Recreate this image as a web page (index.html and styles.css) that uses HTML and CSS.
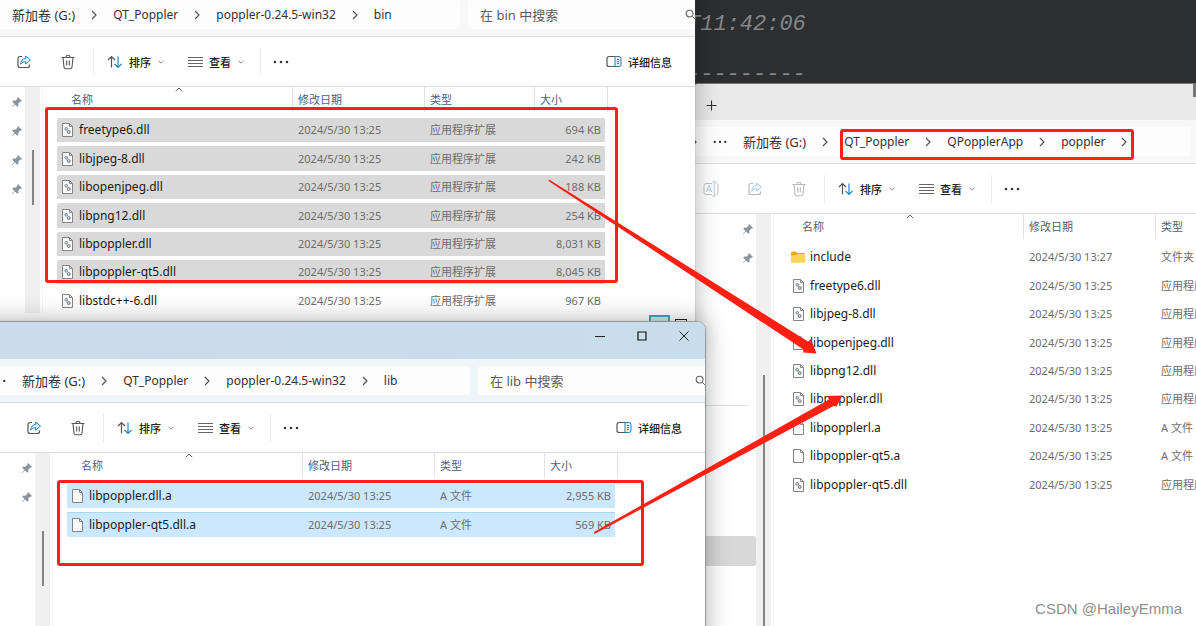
FILE: index.html
```html
<!DOCTYPE html>
<html lang="zh-CN">
<head>
<meta charset="utf-8">
<title>poppler</title>
<link rel="stylesheet" href="styles.css">
</head>
<body>
<svg class="sprite" aria-hidden="true">
  <symbol id="chev" viewBox="0 0 6 10"><path d="M1 1l4 4-4 4" fill="none" stroke="#555" stroke-width="1.2"/></symbol>
  <symbol id="down" viewBox="0 0 8 8"><path d="M1.5 2.7L4 5.2l2.500-2.500" fill="none" stroke="#8a8a8a"/></symbol>
  <symbol id="up" viewBox="0 0 8 5"><path d="M.7 4.300L4 1l3.300 3.300" fill="none" stroke="#666"/></symbol>
  <symbol id="dots" viewBox="0 0 16 4"><path d="M2 2h.01M8 2h.01M14 2h.01" stroke="#333" stroke-width="2.600" stroke-linecap="round"/></symbol>
  <symbol id="rename" viewBox="0 0 16 16"><g fill="none" stroke="#666"><path d="M9 2.500H3a2 2 0 0 0-2 2v7a2 2 0 0 0 2 2h6M13 2.500a2 2 0 0 1 2 2v7a2 2 0 0 1-2 2"/><path d="M3.300 11L6 4.500 8.700 11M4.300 9h3.400M9.500.8h3.400M9.500 15.200h3.400M11.200.8v14.400" stroke="#2486c9"/></g></symbol>
  <symbol id="share" viewBox="0 0 16 16"><path d="M6 2.500H4a2 2 0 0 0-2 2v7a2 2 0 0 0 2 2h7.500a2 2 0 0 0 2-2v-1" fill="none" stroke="#555" stroke-width="1.200"/><path d="M9.700 2l4.800 4.100-4.800 4V7.800C7.300 7.700 5.900 8.500 4.700 10.200 4.900 6.900 6.500 4.600 9.700 4.400z" fill="#d9effb" stroke="#2486b9" stroke-linejoin="round"/></symbol>
  <symbol id="trash" viewBox="0 0 16 16"><path d="M1.500 3.500h13M3 3.500l1 9.800a1.700 1.700 0 0 0 1.700 1.500h4.600a1.700 1.700 0 0 0 1.700-1.500l1-9.800M6 3.300a2 2 0 0 1 4 0M6.700 6.500v5M9.300 6.500v5" fill="none" stroke="#555" stroke-width="1.100"/></symbol>
  <symbol id="sort" viewBox="0 0 16 16"><path d="M4.500 13.500v-11M1 6l3.500-3.500L8 6" fill="none" stroke="#555" stroke-width="1.200"/><path d="M11 2.500v11M7.500 10l3.500 3.500 3.500-3.500" fill="none" stroke="#2486c9" stroke-width="1.200"/></symbol>
  <symbol id="view" viewBox="0 0 16 16"><path d="M1 3.500h15M1 6.500h15M1 9.500h15M1 12.500h15" stroke="#666"/></symbol>
  <symbol id="details" viewBox="0 0 16 16"><path d="M9 2.500H3a2 2 0 0 0-2 2v6a2 2 0 0 0 2 2h6" fill="none" stroke="#555" stroke-width="1.200"/><path d="M9 2.500h4a2 2 0 0 1 2 2v6a2 2 0 0 1-2 2H9zM11 5.500h2M11 7.500h2M11 9.500h2" fill="#e0f2fc" stroke="#2480b5"/></symbol>
  <symbol id="search" viewBox="0 0 12 12"><path d="M8 8l3 3" stroke="#666"/><circle cx="5" cy="5" r="3.700" fill="none" stroke="#666" stroke-width="1.200"/></symbol>
  <symbol id="pin" viewBox="0 0 12 12"><path d="M7 1l4 4-1 .7-.7-.2-2 2.200.2 2-1.200 1L4 8.500 1.300 11l-.6.300.3-.8L3.500 8 1.200 5.700l1-1.100 2 .1L6.500 2.700l-.2-1z" fill="#8b959e"/></symbol>
  <symbol id="file" viewBox="0 0 12 16"><path d="M1 1.500h7l3 3v10H1z" fill="#fafafa" stroke="#848484"/><path d="M8 1.500v3h3" fill="none" stroke="#848484"/></symbol>
  <symbol id="dll" viewBox="0 0 12 16"><path d="M1 1.500h7l3 3v10H1z" fill="#fafafa" stroke="#848484"/><path d="M8 1.500v3h3" fill="none" stroke="#848484"/><circle cx="4.800" cy="6.800" r="1.400" fill="#c4ccd2" stroke="#87929b"/><circle cx="7.200" cy="10" r="1.500" fill="#c4ccd2" stroke="#77838d"/></symbol>
  <symbol id="folder" viewBox="0 0 16 14"><path d="M1 3a1.500 1.500 0 0 1 1.500-1.500h3L7.500 3H14a1 1 0 0 1 1 1v2H1z" fill="#e8a91e"/><path d="M1 5.200h5L7.600 4H14a1.300 1.300 0 0 1 1.300 1.300v6.200A1.300 1.300 0 0 1 14 12.800H2.200A1.400 1.400 0 0 1 .8 11.500z" fill="#fdd35b"/></symbol>
  <symbol id="plus" viewBox="0 0 10 10"><path d="M5 .5v9M.5 5h9" stroke="#333"/></symbol>
  <symbol id="min" viewBox="0 0 10 10"><path d="M0 5.500h10" stroke="#222"/></symbol>
  <symbol id="max" viewBox="0 0 10 10"><path d="M1 1h8v8H1z" fill="none" stroke="#111" stroke-width="1.200"/></symbol>
  <symbol id="close" viewBox="0 0 10 10"><path d="M.5.5l9 9M9.500.5l-9 9" stroke="#222"/></symbol>
</svg>

<main class="desktop">
  <pre class="console">T11:42:06
---------</pre>

  <section class="window window-target" aria-label="poppler">
    <header class="titlebar"><button class="newtab" aria-label="新标签页"><svg><use href="#plus"/></svg></button></header>
    <div class="navbar">
      <nav class="crumbs" aria-label="路径">
        <svg class="chev"><use href="#chev"/></svg><button class="more" aria-label="更多路径"><svg><use href="#dots"/></svg></button>
        <a class="drive" href="#g">新加卷 (G:)</a><svg class="chev"><use href="#chev"/></svg>
        <a href="#qt">QT_Poppler</a><svg class="chev"><use href="#chev"/></svg>
        <a href="#app">QPopplerApp</a><svg class="chev"><use href="#chev"/></svg>
        <a href="#poppler">poppler</a><svg class="chev"><use href="#chev"/></svg>
      </nav>
    </div>
    <div class="toolbar">
      <button class="icon-btn" disabled aria-label="重命名"><svg><use href="#rename"/></svg></button>
      <button class="icon-btn" disabled aria-label="共享"><svg><use href="#share"/></svg></button>
      <button class="icon-btn" disabled aria-label="删除"><svg><use href="#trash"/></svg></button>
      <span class="sep"></span>
      <button class="tool"><svg><use href="#sort"/></svg>排序<svg class="down"><use href="#down"/></svg></button>
      <button class="tool"><svg><use href="#view"/></svg>查看<svg class="down"><use href="#down"/></svg></button>
      <span class="sep"></span>
      <button class="dots-btn" aria-label="更多"><svg><use href="#dots"/></svg></button>
    </div>
    <div class="content">
      <aside class="sidebar">
        <div class="pin"><svg><use href="#pin"/></svg></div>
        <div class="pin"><svg><use href="#pin"/></svg></div>
        <div class="side-line"></div>
        <div class="side-current"></div>
      </aside>
      <div class="scroll"><div class="thumb"></div></div>
      <div class="files">
        <table>
          <colgroup><col class="c-name"><col class="c-date"><col class="c-type"><col class="c-size"><col class="c-end"></colgroup>
          <thead><tr><th><span>名称</span><svg class="up"><use href="#up"/></svg></th><th><span>修改日期</span></th><th><span>类型</span></th><th colspan="2"><span>大小</span></th></tr></thead>
          <tbody>
            <tr><td><div class="name"><svg class="folder"><use href="#folder"/></svg>include</div></td><td>2024/5/30 13:27</td><td>文件夹</td><td></td></tr>
            <tr><td><div class="name"><svg><use href="#dll"/></svg>freetype6.dll</div></td><td>2024/5/30 13:25</td><td>应用程序扩展</td><td></td></tr>
            <tr><td><div class="name"><svg><use href="#dll"/></svg>libjpeg-8.dll</div></td><td>2024/5/30 13:25</td><td>应用程序扩展</td><td></td></tr>
            <tr><td><div class="name"><svg><use href="#dll"/></svg>libopenjpeg.dll</div></td><td>2024/5/30 13:25</td><td>应用程序扩展</td><td></td></tr>
            <tr><td><div class="name"><svg><use href="#dll"/></svg>libpng12.dll</div></td><td>2024/5/30 13:25</td><td>应用程序扩展</td><td></td></tr>
            <tr><td><div class="name"><svg><use href="#dll"/></svg>libpoppler.dll</div></td><td>2024/5/30 13:25</td><td>应用程序扩展</td><td></td></tr>
            <tr><td><div class="name"><svg><use href="#file"/></svg>libpopplerl.a</div></td><td>2024/5/30 13:25</td><td>A 文件</td><td></td></tr>
            <tr><td><div class="name"><svg><use href="#file"/></svg>libpoppler-qt5.a</div></td><td>2024/5/30 13:25</td><td>A 文件</td><td></td></tr>
            <tr><td><div class="name"><svg><use href="#dll"/></svg>libpoppler-qt5.dll</div></td><td>2024/5/30 13:25</td><td>应用程序扩展</td><td></td></tr>
          </tbody>
        </table>
      </div>
    </div>
  </section>
  <div class="edge-thumb"></div>

  <section class="window window-bin" aria-label="bin">
    <header class="titlebar"></header>
    <div class="navbar">
      <nav class="crumbs" aria-label="路径">
        <svg class="chev"><use href="#chev"/></svg><button class="more" aria-label="更多路径"><svg><use href="#dots"/></svg></button>
        <a class="drive" href="#g">新加卷 (G:)</a><svg class="chev"><use href="#chev"/></svg>
        <a href="#qt">QT_Poppler</a><svg class="chev"><use href="#chev"/></svg>
        <a href="#win32">poppler-0.24.5-win32</a><svg class="chev"><use href="#chev"/></svg>
        <a href="#bin">bin</a>
      </nav>
      <label class="search"><input type="text" placeholder="在 bin 中搜索" aria-label="在 bin 中搜索"><svg><use href="#search"/></svg></label>
    </div>
    <div class="toolbar">
      <button class="icon-btn" aria-label="重命名"><svg><use href="#rename"/></svg></button>
      <button class="icon-btn" aria-label="共享"><svg><use href="#share"/></svg></button>
      <button class="icon-btn" aria-label="删除"><svg><use href="#trash"/></svg></button>
      <span class="sep"></span>
      <button class="tool"><svg><use href="#sort"/></svg>排序<svg class="down"><use href="#down"/></svg></button>
      <button class="tool"><svg><use href="#view"/></svg>查看<svg class="down"><use href="#down"/></svg></button>
      <span class="sep"></span>
      <button class="dots-btn" aria-label="更多"><svg><use href="#dots"/></svg></button>
      <button class="tool details"><svg><use href="#details"/></svg>详细信息</button>
    </div>
    <div class="content">
      <aside class="sidebar">
        <div class="pin"><svg><use href="#pin"/></svg></div>
        <div class="pin"><svg><use href="#pin"/></svg></div>
        <div class="pin"><svg><use href="#pin"/></svg></div>
        <div class="pin"><svg><use href="#pin"/></svg></div>
      </aside>
      <div class="scroll"><div class="thumb"></div></div>
      <div class="files">
        <table>
          <colgroup><col class="c-name"><col class="c-date"><col class="c-type"><col class="c-size"><col class="c-end"></colgroup>
          <thead><tr><th><span>名称</span><svg class="up"><use href="#up"/></svg></th><th><span>修改日期</span></th><th><span>类型</span></th><th colspan="2"><span>大小</span></th></tr></thead>
          <tbody>
            <tr class="grey"><td><div class="name"><svg><use href="#dll"/></svg>freetype6.dll</div></td><td>2024/5/30 13:25</td><td>应用程序扩展</td><td>694 KB</td></tr>
            <tr class="grey"><td><div class="name"><svg><use href="#dll"/></svg>libjpeg-8.dll</div></td><td>2024/5/30 13:25</td><td>应用程序扩展</td><td>242 KB</td></tr>
            <tr class="grey"><td><div class="name"><svg><use href="#dll"/></svg>libopenjpeg.dll</div></td><td>2024/5/30 13:25</td><td>应用程序扩展</td><td>188 KB</td></tr>
            <tr class="grey"><td><div class="name"><svg><use href="#dll"/></svg>libpng12.dll</div></td><td>2024/5/30 13:25</td><td>应用程序扩展</td><td>254 KB</td></tr>
            <tr class="grey"><td><div class="name"><svg><use href="#dll"/></svg>libpoppler.dll</div></td><td>2024/5/30 13:25</td><td>应用程序扩展</td><td>8,031 KB</td></tr>
            <tr class="grey"><td><div class="name"><svg><use href="#dll"/></svg>libpoppler-qt5.dll</div></td><td>2024/5/30 13:25</td><td>应用程序扩展</td><td>8,045 KB</td></tr>
            <tr><td><div class="name"><svg><use href="#dll"/></svg>libstdc++-6.dll</div></td><td>2024/5/30 13:25</td><td>应用程序扩展</td><td>967 KB</td></tr>
          </tbody>
        </table>
      </div>
    </div>
    <footer class="status">
      <button class="mode mode-on" aria-label="详细列表"><i></i></button>
      <button class="mode" aria-label="大图标"><i></i></button>
    </footer>
  </section>

  <section class="window window-lib" aria-label="lib">
    <header class="titlebar">
      <button class="newtab" aria-label="新标签页"><svg><use href="#plus"/></svg></button>
      <div class="controls">
        <button aria-label="最小化"><svg><use href="#min"/></svg></button>
        <button aria-label="最大化"><svg><use href="#max"/></svg></button>
        <button aria-label="关闭"><svg><use href="#close"/></svg></button>
      </div>
    </header>
    <div class="navbar">
      <nav class="crumbs" aria-label="路径">
        <svg class="chev"><use href="#chev"/></svg><button class="more" aria-label="更多路径"><svg><use href="#dots"/></svg></button>
        <a class="drive" href="#g">新加卷 (G:)</a><svg class="chev"><use href="#chev"/></svg>
        <a href="#qt">QT_Poppler</a><svg class="chev"><use href="#chev"/></svg>
        <a href="#win32">poppler-0.24.5-win32</a><svg class="chev"><use href="#chev"/></svg>
        <a href="#lib">lib</a>
      </nav>
      <label class="search"><input type="text" placeholder="在 lib 中搜索" aria-label="在 lib 中搜索"><svg><use href="#search"/></svg></label>
    </div>
    <div class="toolbar">
      <button class="icon-btn" aria-label="重命名"><svg><use href="#rename"/></svg></button>
      <button class="icon-btn" aria-label="共享"><svg><use href="#share"/></svg></button>
      <button class="icon-btn" aria-label="删除"><svg><use href="#trash"/></svg></button>
      <span class="sep"></span>
      <button class="tool"><svg><use href="#sort"/></svg>排序<svg class="down"><use href="#down"/></svg></button>
      <button class="tool"><svg><use href="#view"/></svg>查看<svg class="down"><use href="#down"/></svg></button>
      <span class="sep"></span>
      <button class="dots-btn" aria-label="更多"><svg><use href="#dots"/></svg></button>
      <button class="tool details"><svg><use href="#details"/></svg>详细信息</button>
    </div>
    <div class="content">
      <aside class="sidebar">
        <div class="pin"><svg><use href="#pin"/></svg></div>
        <div class="pin"><svg><use href="#pin"/></svg></div>
      </aside>
      <div class="scroll"><div class="thumb"></div></div>
      <div class="files">
        <table>
          <colgroup><col class="c-name"><col class="c-date"><col class="c-type"><col class="c-size"><col class="c-end"></colgroup>
          <thead><tr><th><span>名称</span><svg class="up"><use href="#up"/></svg></th><th><span>修改日期</span></th><th><span>类型</span></th><th colspan="2"><span>大小</span></th></tr></thead>
          <tbody>
            <tr class="blue"><td><div class="name"><svg><use href="#file"/></svg>libpoppler.dll.a</div></td><td>2024/5/30 13:25</td><td>A 文件</td><td>2,955 KB</td></tr>
            <tr class="blue focus"><td><div class="name"><svg><use href="#file"/></svg>libpoppler-qt5.dll.a</div></td><td>2024/5/30 13:25</td><td>A 文件</td><td>569 KB</td></tr>
          </tbody>
        </table>
      </div>
    </div>
  </section>

  <svg class="marks" aria-hidden="true">
    <g fill="none" stroke="#ff2012" stroke-width="3">
      <rect x="46.500" y="108.500" width="570" height="173" rx="1.500"/>
      <rect x="58.500" y="481.500" width="584" height="83" rx="1.500"/>
      <rect x="841.500" y="130.500" width="291" height="28" rx="1.500"/>
    </g>
    <path d="M549 179.500L808 341.500 811 339 816.500 353.500 803 352.500 803.500 349.500 548.500 181z" fill="#ff2012"/>
    <path d="M594 532L829 399.500 827.500 396 842.500 395.500 836.500 406.500 833.500 406 594.500 534z" fill="#ff2012"/>
  </svg>
  <p class="watermark">CSDN @HaileyEmma</p>
</main>
</body>
</html>
```
FILE: styles.css
```css
* { box-sizing: border-box; }

body {
  margin: 0;
  font-family: "Noto Sans", "Noto Sans CJK SC", sans-serif;
  font-size: 11px;
  color: #222;
}

button {
  font: inherit;
  color: inherit;
  border: 0;
  padding: 0;
  background: none;
}

svg { display: block; flex: none; }
.sprite { position: absolute; width: 0; height: 0; }

.desktop {
  position: relative;
  height: 100vh;
  overflow: hidden;
  background: #2d2e30;
}

.console {
  margin: 0;
  padding-left: 687px;
  font: italic 22px/50px "Liberation Mono", monospace;
  color: #85878a;
}

/* windows */
.window {
  position: absolute;
  width: 735px;
  display: flex;
  flex-direction: column;
  overflow: hidden;
  background: #fff;
  border-radius: 8px;
}
.window-target { left: 691px; top: 83px; bottom: -20px; border-top: 1px solid #777; }
.window-bin { left: -40px; top: -44px; box-shadow: 0 0 24px rgba(0, 0, 0, .3), 0 0 1px #777; }
.window-lib { left: -30px; top: 322px; bottom: -20px; box-shadow: 0 0 24px rgba(0, 0, 0, .35), 0 0 1px 1px #b0b4b8; }

.titlebar {
  flex: none;
  display: flex;
  justify-content: space-between;
  height: 37px;
  background: #e9e9e9;
}
.window-target .titlebar { height: 36px; }
.window-lib .titlebar { background: linear-gradient(90deg, #cddaea, #c8ddeb); }
.newtab { display: flex; align-items: center; padding: 6px 15px 0; }
.newtab svg { width: 11px; height: 11px; }
.controls { display: flex; height: 28px; }
.controls button { width: 42px; display: flex; align-items: center; justify-content: center; }
.controls svg { width: 10px; height: 10px; }

.navbar {
  flex: none;
  display: flex;
  gap: 8px;
  height: 44px;
  padding: 7px 0;
  background: #f8f8f8;
  border-bottom: 1px solid #dedede;
}
.window-lib .navbar { background: #eef6fa; border-color: #d5dde2; }
.crumbs, .search { background: #fdfdfd; border-radius: 4px; }
.crumbs {
  flex: none;
  display: flex;
  align-items: center;
  gap: 16px;
  width: 500px;
  font-size: 12px;
  white-space: nowrap;
}
.crumbs a { color: #333; text-decoration: none; }
.crumbs .drive { font-size: 13px; }
.chev { width: 6px; height: 10px; }
.more svg { width: 14px; height: 4px; }
.search { flex: none; display: flex; align-items: center; width: 240px; padding: 0 12px; }
.search input {
  flex: 1;
  min-width: 0;
  padding: 0;
  border: 0;
  outline: 0;
  background: none;
  font: inherit;
  font-size: 13px;
}
.search input::placeholder { color: #5c5c5c; }
.search svg { width: 11px; height: 11px; }

.toolbar {
  flex: none;
  display: flex;
  align-items: center;
  gap: 6px;
  height: 50px;
  padding-left: 1px;
  border-bottom: 1px solid #d9dde0;
}
.toolbar svg { width: 16px; height: 16px; }
.icon-btn { width: 38px; height: 32px; display: flex; align-items: center; justify-content: center; }
.icon-btn:disabled { opacity: .4; }
.sep { width: 1px; height: 28px; background: #ececec; }
.tool {
  display: flex;
  align-items: center;
  gap: 6px;
  height: 32px;
  padding: 0 9px 0 7px;
  font-weight: 500;
}
.toolbar .down { width: 8px; height: 8px; }
.dots-btn { width: 28px; height: 32px; display: flex; align-items: center; justify-content: center; }
.details { margin-left: auto; margin-right: 14px; }

.content { flex: 1; display: flex; }
.sidebar { flex: none; width: 65px; }
.pin { height: 29px; display: flex; align-items: center; justify-content: flex-end; padding-right: 2px; }
.pin svg { width: 12px; height: 12px; }
.side-line { height: 1px; margin: 133px 8px 130px 0; background: #dcdcdc; }
.side-current { height: 30px; background: #d8d8d8; border-radius: 0 2px 2px 0; }

.scroll { flex: none; width: 15px; padding-left: 7px; background: #f0f0f0; }
.thumb { width: 2px; height: 55px; margin-top: 63px; background: #858585; }
.window-lib .thumb { margin-top: 78px; }
.window-target .thumb { height: 100%; margin-top: 161px; }
.window-target .scroll { overflow: hidden; }
.files { flex: 1; min-width: 0; margin-left: 2px; padding-left: 14px; border-left: 1px solid #f5f5f5; }

/* file lists */
table { border-spacing: 0; table-layout: fixed; width: 551px; }
.c-name { width: 236px; }
.c-date { width: 132px; }
.c-type { width: 110px; }
.c-size { width: 70px; }
.c-end { width: 3px; }
th { position: relative; padding: 0 0 6px; font-weight: 400; text-align: left; color: #4c607a; }
th span { display: block; height: 25px; line-height: 25px; padding-left: 5px; border-right: 1px solid #e2e2e2; }
th:first-child span { padding-left: 14px; }
.up { position: absolute; top: 0; left: 118px; width: 8px; height: 5px; }

td {
  height: 28px;
  padding: 0 0 0 5px;
  border-bottom: 4px solid transparent;
  background-clip: padding-box;
  color: #6d6d6d;
  white-space: nowrap;
  line-height: 16px;
}
tr:nth-child(5n+2) td, tr:nth-child(5n+4) td { height: 29px; }
tbody tr:last-child td { height: 25px; border-bottom-width: 0; }
.window-lib tbody td { height: 28px; border-bottom-width: 4px; }
td:first-child { padding-left: 4px; border-radius: 2px 0 0 2px; color: #1b1b1b; font-size: 12px; }
td:nth-child(4) { padding: 0 4px 0 0; text-align: right; }
.name { display: flex; align-items: center; gap: 5px; }
.name svg { width: 13px; height: 16px; }
.name .folder { width: 16px; height: 14px; margin: 0 -1px 0 -2px; }
.grey td { background-color: #d9d9d9; }
.blue td { background-color: #cce8ff; }
.focus td { box-shadow: inset 0 1px #a9d5f5; }

.status { display: flex; justify-content: flex-end; gap: 3px; height: 30px; padding: 2px 6px 0 0; }
.mode { display: flex; align-items: flex-start; justify-content: center; width: 16px; height: 22px; padding-top: 4px; }
.mode i { width: 12px; height: 10px; border: 1px solid #222; }
.mode-on { width: 21px; background: #d5e9f2; border: 2px solid #4aa3bd; }

.edge-thumb { position: absolute; right: 0; top: 84px; width: 3px; height: 13px; background: #777; }

/* annotations */
.marks { position: absolute; inset: 0; width: 100%; height: 100%; pointer-events: none; }
.watermark {
  position: absolute;
  right: 14px;
  bottom: 8px;
  margin: 0;
  font: 15px/18px "Liberation Sans", sans-serif;
  color: #8e8e8e;
}
```
